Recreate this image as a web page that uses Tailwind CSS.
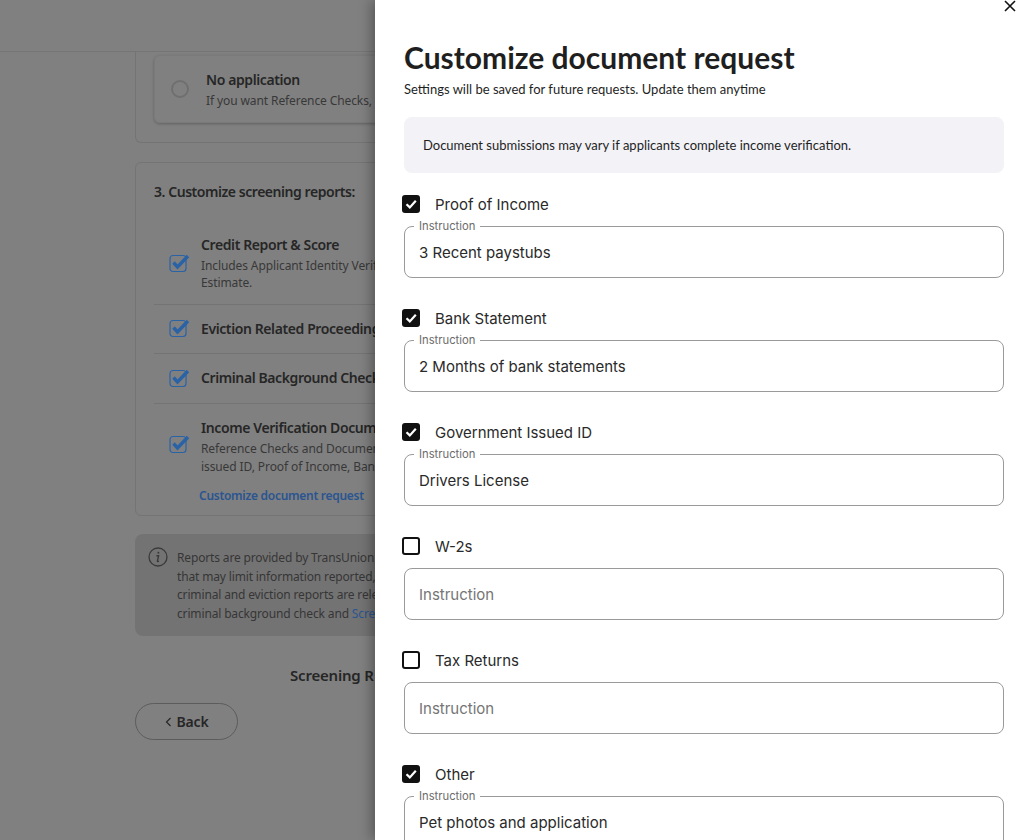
<!DOCTYPE html>
<html lang="en">
<head>
    <meta charset="UTF-8">
    <meta name="viewport" content="width=device-width, initial-scale=1.0">
    <script src="https://cdn.jsdelivr.net/npm/@tailwindcss/browser@4"></script>
    <title>Customize document request</title>
</head>
<body>
<div class="relative h-[840px] w-[1028px] overflow-hidden bg-[#808080] font-['Noto_Sans',sans-serif] text-[#262626]">

    <!-- page behind the drawer -->
    <header class="h-[52px] border-b border-[#757575]"></header>

    <main class="w-[375px] overflow-hidden pl-[135px] whitespace-nowrap">
        <section class="h-[91px] w-[500px] rounded-b-md border border-t-0 border-[#747474] px-[18px] pt-[3px]">
            <div class="flex h-[68px] items-center rounded-md border border-[#7a7a7a] shadow-[0_1px_3px_rgba(0,0,0,0.25)]">
                <span class="ml-4 h-[18px] w-[18px] rounded-full border-2 border-[#6f6f6f]"></span>
                <div class="mt-[2px] ml-[17px]">
                    <p class="text-[14px] leading-[20px] font-semibold tracking-[-0.4px]">No application</p>
                    <p class="mt-[1px] text-[12px] leading-[20px] tracking-[-0.1px] text-[#383838]">If you want Reference Checks, s</p>
                </div>
            </div>
        </section>

        <section class="mt-[19px] h-[354px] w-[500px] rounded-md border border-[#747474] px-[18px]">
            <h2 class="pt-[19px] text-[14px] leading-[20px] font-semibold tracking-[-0.45px]">3. Customize screening reports:</h2>

            <div class="mt-[22px] flex h-[81px] items-center border-b border-[#747474] pb-[2px]">
                <svg class="ml-[15px] h-[20px] w-[21px] text-[#2a62a6]" viewBox="0 0 21 20" fill="none" stroke="currentColor" stroke-width="1.2"><rect x="1" y="2.5" width="16" height="16" rx="3"/><path d="M4.5 9.5 8.5 14 19 3" stroke-width="3.4"/></svg>
                <div class="ml-[11px]">
                    <p class="text-[14px] leading-[20px] font-semibold tracking-[-0.4px]">Credit Report &amp; Score</p>
                    <p class="mt-[2px] text-[12px] leading-[17px] tracking-[-0.1px] text-[#383838]">Includes Applicant Identity Verif<br>Estimate.</p>
                </div>
            </div>

            <div class="flex h-[49px] items-center border-b border-[#747474] pb-[2px]">
                <svg class="ml-[15px] h-[20px] w-[21px] text-[#2a62a6]" viewBox="0 0 21 20" fill="none" stroke="currentColor" stroke-width="1.2"><rect x="1" y="2.5" width="16" height="16" rx="3"/><path d="M4.5 9.5 8.5 14 19 3" stroke-width="3.4"/></svg>
                <p class="ml-[11px] text-[14px] font-semibold tracking-[-0.4px]">Eviction Related Proceeding</p>
            </div>

            <div class="flex h-[50px] items-center border-b border-[#747474] pb-[2px]">
                <svg class="ml-[15px] h-[20px] w-[21px] text-[#2a62a6]" viewBox="0 0 21 20" fill="none" stroke="currentColor" stroke-width="1.2"><rect x="1" y="2.5" width="16" height="16" rx="3"/><path d="M4.5 9.5 8.5 14 19 3" stroke-width="3.4"/></svg>
                <p class="ml-[11px] text-[14px] font-semibold tracking-[-0.4px]">Criminal Background Check</p>
            </div>

            <div class="flex h-[83px] items-center pt-[2px]">
                <svg class="mb-[5px] ml-[15px] h-[20px] w-[21px] text-[#2a62a6]" viewBox="0 0 21 20" fill="none" stroke="currentColor" stroke-width="1.2"><rect x="1" y="2.5" width="16" height="16" rx="3"/><path d="M4.5 9.5 8.5 14 19 3" stroke-width="3.4"/></svg>
                <div class="ml-[11px]">
                    <p class="text-[14px] leading-[20px] font-semibold tracking-[-0.4px]">Income Verification Docum</p>
                    <p class="mt-[2px] text-[12px] leading-[18px] tracking-[-0.1px] text-[#383838]">Reference Checks and Documen<br>issued ID, Proof of Income, Bank</p>
                </div>
            </div>
            <a class="ml-[45px] block text-[12px] leading-[18px] font-semibold tracking-[-0.28px] text-[#2a5590]">Customize document request</a>
        </section>

        <section class="mt-[18px] flex h-[102px] w-[500px] rounded-lg bg-[#737373] pt-[13px] pl-[13px]">
            <svg class="h-5 w-5 shrink-0 text-[#3a3a3a]" viewBox="0 0 20 20" fill="none" stroke="currentColor" stroke-width="1.3"><circle cx="10" cy="10" r="9"/><circle cx="10.4" cy="5.8" r="1" fill="currentColor" stroke="none"/><path d="M8.4 8.8h2.2l-1.2 5.2q-.1.8 1.6.2" stroke-width="1.4"/></svg>
            <p class="mt-[2px] ml-[9px] text-[12px] leading-[18.7px] tracking-[-0.15px] text-[#363636]">Reports are provided by TransUnion<br>that may limit information reported,<br>criminal and eviction reports are rele<br>criminal background check and <a class="text-[#2a5590]">Scre</a></p>
        </section>

        <p class="mt-[28px] pl-[155px] text-[15px] leading-[22px] font-semibold tracking-[-0.2px]">Screening R</p>

        <a class="mt-[17px] flex h-[37px] w-[103px] items-center justify-center gap-[5px] rounded-full border border-[#5c5c5c] text-[14px] font-semibold tracking-[-0.2px]">
            <svg class="h-[10px] w-[7px]" viewBox="0 0 7 10" fill="none" stroke="currentColor" stroke-width="1.2"><path d="M5.5 1 1.5 5l4 4"/></svg>
            Back
        </a>
    </main>

    <!-- drawer -->
    <aside class="absolute inset-y-0 left-[375px] w-[653px] overflow-hidden bg-white pl-[29px] text-[#1f1f1f] shadow-[-3px_0_12px_rgba(0,0,0,0.35)]">
        <button class="absolute top-0 right-[12px] text-[#111]" aria-label="Close">
            <svg class="h-[12px] w-[12px]" viewBox="0 0 12 12" fill="none" stroke="currentColor" stroke-width="1.6"><path d="M1 1l10 10M11 1 1 11"/></svg>
        </button>

        <h1 class="pt-[38px] font-['Lato',sans-serif] text-[30px] leading-[38px] font-bold">Customize document request</h1>
        <p class="mt-[3px] font-['Lato',sans-serif] text-[13px] leading-[20px]">Settings will be saved for future requests. Update them anytime</p>

        <div class="mt-[18px] flex h-[56px] w-[600px] items-center rounded-lg bg-[#f2f2f7] pt-[2px] pl-[19px] font-['Lato',sans-serif] text-[13px]">Document submissions may vary if applicants complete income verification.</div>

        <form class="mt-[20px] flex w-[600px] flex-col gap-[29px] font-['Inter',sans-serif] text-[#2a2a2a]">
            <div>
                <label class="mb-[11px] flex h-[22px] items-center text-[15px]">
                    <span class="-ml-[2px] flex h-[18px] w-[18px] items-center justify-center rounded-[3px] bg-[#111]"><svg class="h-[14px] w-[14px] text-white" viewBox="0 0 14 14" fill="none" stroke="currentColor" stroke-width="2.2"><path d="M2.5 7.2 5.8 10.4 11.8 3.8"/></svg></span>
                    <span class="mt-[2px] ml-[15px]">Proof of Income</span>
                </label>
                <div class="relative">
                    <span class="absolute top-[-8px] left-[10px] bg-white px-[5px] text-[11.25px] leading-[16px] text-[#6b6b6b]">Instruction</span>
                    <input class="h-[52px] w-full rounded-lg border border-[#9a9a9a] px-[14px] text-[15px] text-[#2a2a2a] outline-none" value="3 Recent paystubs">
                </div>
            </div>
            <div>
                <label class="mb-[11px] flex h-[22px] items-center text-[15px]">
                    <span class="-ml-[2px] flex h-[18px] w-[18px] items-center justify-center rounded-[3px] bg-[#111]"><svg class="h-[14px] w-[14px] text-white" viewBox="0 0 14 14" fill="none" stroke="currentColor" stroke-width="2.2"><path d="M2.5 7.2 5.8 10.4 11.8 3.8"/></svg></span>
                    <span class="mt-[2px] ml-[15px]">Bank Statement</span>
                </label>
                <div class="relative">
                    <span class="absolute top-[-8px] left-[10px] bg-white px-[5px] text-[11.25px] leading-[16px] text-[#6b6b6b]">Instruction</span>
                    <input class="h-[52px] w-full rounded-lg border border-[#9a9a9a] px-[14px] text-[15px] text-[#2a2a2a] outline-none" value="2 Months of bank statements">
                </div>
            </div>
            <div>
                <label class="mb-[11px] flex h-[22px] items-center text-[15px]">
                    <span class="-ml-[2px] flex h-[18px] w-[18px] items-center justify-center rounded-[3px] bg-[#111]"><svg class="h-[14px] w-[14px] text-white" viewBox="0 0 14 14" fill="none" stroke="currentColor" stroke-width="2.2"><path d="M2.5 7.2 5.8 10.4 11.8 3.8"/></svg></span>
                    <span class="mt-[2px] ml-[15px]">Government Issued ID</span>
                </label>
                <div class="relative">
                    <span class="absolute top-[-8px] left-[10px] bg-white px-[5px] text-[11.25px] leading-[16px] text-[#6b6b6b]">Instruction</span>
                    <input class="h-[52px] w-full rounded-lg border border-[#9a9a9a] px-[14px] text-[15px] text-[#2a2a2a] outline-none" value="Drivers License">
                </div>
            </div>
            <div>
                <label class="mb-[11px] flex h-[22px] items-center text-[15px]">
                    <span class="-ml-[2px] h-[18px] w-[18px] rounded-[3px] border-2 border-[#111]"></span>
                    <span class="mt-[2px] ml-[15px]">W-2s</span>
                </label>
                <input class="h-[52px] w-full rounded-lg border border-[#9a9a9a] px-[14px] text-[15px] outline-none placeholder:text-[#757575]" placeholder="Instruction">
            </div>
            <div>
                <label class="mb-[11px] flex h-[22px] items-center text-[15px]">
                    <span class="-ml-[2px] h-[18px] w-[18px] rounded-[3px] border-2 border-[#111]"></span>
                    <span class="mt-[2px] ml-[15px]">Tax Returns</span>
                </label>
                <input class="h-[52px] w-full rounded-lg border border-[#9a9a9a] px-[14px] text-[15px] outline-none placeholder:text-[#757575]" placeholder="Instruction">
            </div>
            <div>
                <label class="mb-[11px] flex h-[22px] items-center text-[15px]">
                    <span class="-ml-[2px] flex h-[18px] w-[18px] items-center justify-center rounded-[3px] bg-[#111]"><svg class="h-[14px] w-[14px] text-white" viewBox="0 0 14 14" fill="none" stroke="currentColor" stroke-width="2.2"><path d="M2.5 7.2 5.8 10.4 11.8 3.8"/></svg></span>
                    <span class="mt-[2px] ml-[15px]">Other</span>
                </label>
                <div class="relative">
                    <span class="absolute top-[-8px] left-[10px] bg-white px-[5px] text-[11.25px] leading-[16px] text-[#6b6b6b]">Instruction</span>
                    <input class="h-[52px] w-full rounded-lg border border-[#9a9a9a] px-[14px] text-[15px] text-[#2a2a2a] outline-none" value="Pet photos and application">
                </div>
            </div>
        </form>
    </aside>
</div>
</body>
</html>
